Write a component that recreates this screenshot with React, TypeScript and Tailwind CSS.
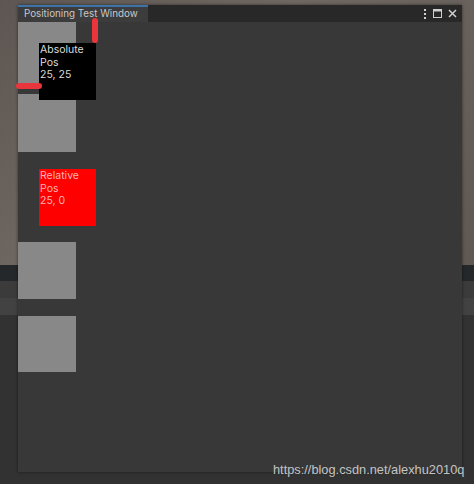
export default function App() {
  return (
    <div className="relative h-[484px] w-[474px] overflow-hidden bg-[#333333] font-['Inter',sans-serif]">
      {/* desktop background bands */}
      <div className="flex h-full flex-col">
        <div className="h-[265px] bg-[linear-gradient(135deg,#5d5652,#6f6761_40%,#5f5853)]" />
        <div className="h-[16px] bg-[#25282a]" />
        <div className="h-[17px] bg-[#3b3b3b]" />
        <div className="h-[17px] bg-[#424242]" />
        <div className="flex-1 bg-[#323232]" />
      </div>

      {/* editor window */}
      <div className="absolute left-[18px] top-[5px] flex h-[467px] w-[444px] flex-col shadow-[0_0_3px_rgba(0,0,0,0.5)]">
        <div className="flex h-[17px] items-stretch bg-[#282828]">
          <div className="flex w-[130px] items-center border-t-2 border-[#3d73a8] bg-[#3c3c3c] pl-[6px] text-[9.8px] text-[#c8c8c8]">
            Positioning Test Window
          </div>
          <div className="ml-auto flex items-center pr-[5px] text-[#d0d0d0]">
            <svg width="4" height="10" viewBox="0 0 4 10">
              <rect x="1" y="0" width="2" height="2" fill="currentColor" />
              <rect x="1" y="4" width="2" height="2" fill="currentColor" />
              <rect x="1" y="8" width="2" height="2" fill="currentColor" />
            </svg>
            <svg className="ml-[6px]" width="9" height="9" viewBox="0 0 9 9">
              <rect x="0.5" y="0.5" width="8" height="8" fill="none" stroke="currentColor" />
              <rect x="0.5" y="0.5" width="8" height="2" fill="currentColor" />
            </svg>
            <svg className="ml-[6px]" width="9" height="9" viewBox="0 0 9 9">
              <path d="M1 1L8 8M8 1L1 8" stroke="currentColor" strokeWidth="1.5" />
            </svg>
          </div>
        </div>

        <div className="relative flex flex-1 flex-col bg-[#383838] text-[10.5px] leading-[12.5px]">
          <div className="h-[62px] w-[58px] bg-[#888888]" />
          <div className="mt-[10px] h-[58px] w-[58px] bg-[#888888]" />
          <div className="ml-[21px] mt-[17px] h-[57px] w-[57px] bg-[#ff0000] pl-[1px] pt-[1px] text-[#ffb3b3]">
            <div>Relative</div>
            <div>Pos</div>
            <div>25, 0</div>
          </div>
          <div className="mt-[16px] h-[57px] w-[58px] bg-[#888888]" />
          <div className="mt-[17px] h-[56px] w-[58px] bg-[#888888]" />

          <div className="absolute left-[21px] top-[21px] h-[57px] w-[57px] bg-black pl-[1px] pt-[1px] text-[#dcdcdc]">
            <div>Absolute</div>
            <div>Pos</div>
            <div>25, 25</div>
          </div>
        </div>

        {/* offset markers */}
        <div className="absolute left-[74px] top-[13px] h-[25px] w-[6px] rounded-full bg-[#e8363c]" />
        <div className="absolute left-[-2px] top-[78px] h-[6px] w-[26px] rounded-full bg-[#e8363c]" />
      </div>

      <div className="absolute left-[273px] top-[460px] font-['Liberation_Sans',sans-serif] text-[12.8px] text-[#c4c4c4]">
        https://blog.csdn.net/alexhu2010q
      </div>
    </div>
  );
}
